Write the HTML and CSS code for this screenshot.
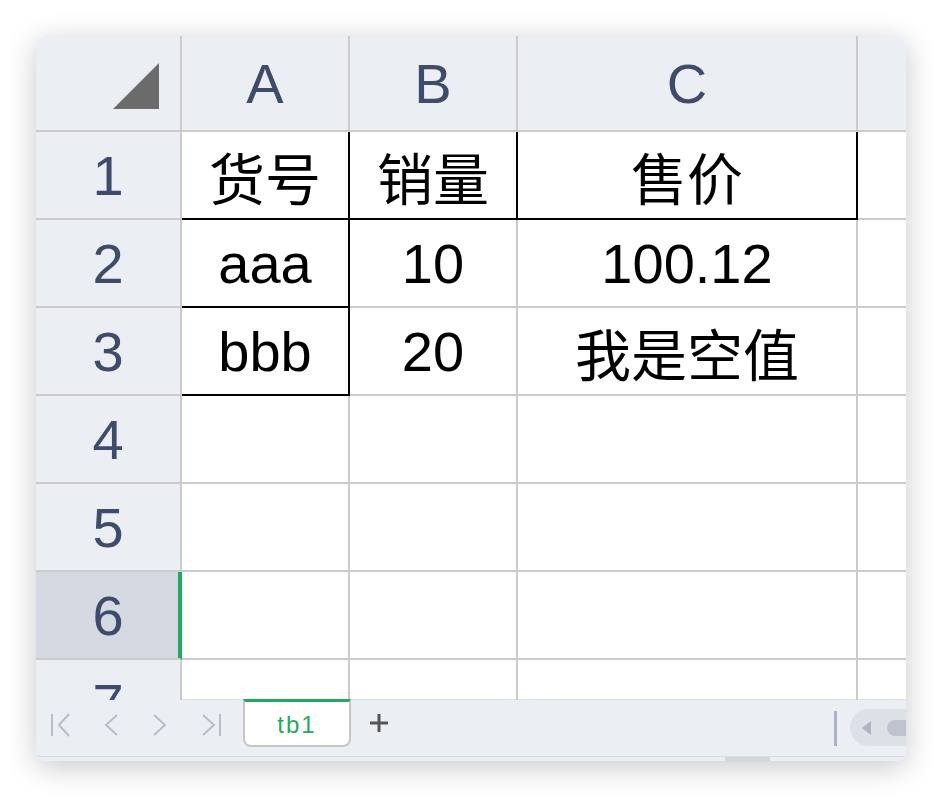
FILE: index.html
```html
<!DOCTYPE html>
<html lang="zh">
<head>
    <meta charset="UTF-8">
    <title>tb1</title>
    <link rel="stylesheet" href="styles.css">
</head>
<body>
    <div class="window">
        <div class="sheet">
            <div class="corner">
                <svg width="46" height="46" viewBox="0 0 46 46"><polygon points="46,0 46,46 0,46" fill="#6b6b6b"/></svg>
            </div>
            <div class="col-head">A</div>
            <div class="col-head">B</div>
            <div class="col-head">C</div>
            <div class="col-head last"></div>

            <div class="row-head">1</div>
            <div class="cell b-r b-b">货号</div>
            <div class="cell b-r b-b">销量</div>
            <div class="cell b-r b-b">售价</div>
            <div class="cell last"></div>

            <div class="row-head">2</div>
            <div class="cell b-r b-b">aaa</div>
            <div class="cell">10</div>
            <div class="cell">100.12</div>
            <div class="cell last"></div>

            <div class="row-head">3</div>
            <div class="cell b-r b-b">bbb</div>
            <div class="cell">20</div>
            <div class="cell">我是空值</div>
            <div class="cell last"></div>

            <div class="row-head">4</div>
            <div class="cell"></div>
            <div class="cell"></div>
            <div class="cell"></div>
            <div class="cell last"></div>

            <div class="row-head">5</div>
            <div class="cell"></div>
            <div class="cell"></div>
            <div class="cell"></div>
            <div class="cell last"></div>

            <div class="row-head active">6</div>
            <div class="cell"></div>
            <div class="cell"></div>
            <div class="cell"></div>
            <div class="cell last"></div>

            <div class="row-head">7</div>
            <div class="cell"></div>
            <div class="cell"></div>
            <div class="cell"></div>
            <div class="cell last"></div>
        </div>

        <div class="tabbar">
            <svg class="nav" width="195" height="58" viewBox="0 0 195 58">
                <g fill="none" stroke="#b9bdc9" stroke-width="2">
                    <line x1="16" y1="15" x2="16" y2="37"/>
                    <polyline points="33,15 23,26 33,37"/>
                    <polyline points="81,16 70,26 81,36"/>
                    <polyline points="118,16 129,26 118,36"/>
                    <polyline points="167,16 178,26 167,36"/>
                    <line x1="184" y1="15" x2="184" y2="37"/>
                </g>
            </svg>
            <div class="tab">tb1</div>
            <svg class="add" width="18" height="18" viewBox="0 0 18 18">
                <path d="M9 0 V18 M0 9 H18" stroke="#555" stroke-width="3"/>
            </svg>
            <div class="spacer"></div>
            <div class="divider"></div>
            <div class="scroll">
                <svg class="scroll-arrow" width="9" height="14" viewBox="0 0 9 14"><polygon points="9,0 9,14 0,7" fill="#aeb3c2"/></svg>
                <div class="scroll-thumb"></div>
            </div>
        </div>
        <div class="hscroll"><div class="hscroll-thumb"></div></div>
    </div>
</body>
</html>
```

FILE: styles.css
```css
body {
    margin: 0;
    padding: 36px;
    background-color: #fff;
    font-family: "Liberation Sans", "Noto Sans CJK SC", sans-serif;
}

.window {
    width: 870px;
    border-radius: 10px;
    overflow: hidden;
    background-color: #fff;
    box-shadow: 0 6px 30px rgba(0, 0, 0, 0.22);
}

.sheet {
    display: grid;
    grid-template-columns: 146px 168px 168px 340px 1fr;
    grid-template-rows: 96px;
    grid-auto-rows: 88px;
    height: 664px;
    overflow: hidden;
}

.sheet > div {
    box-sizing: border-box;
    border-right: 2px solid #cbcbcb;
    border-bottom: 2px solid #cbcbcb;
    display: flex;
    align-items: center;
    justify-content: center;
    font-size: 56px;
}

.corner {
    background-color: #ebeef2;
    justify-content: flex-end !important;
    align-items: flex-end !important;
    padding: 0 21px 21px 0;
}

.corner svg {
    display: block;
}

.col-head,
.row-head {
    background-color: #ebeef2;
    color: #3f4b6b;
}

.row-head.active {
    background-color: #d5d9e2;
    border-right-color: #1fab5f !important;
    box-shadow: inset -2px 0 0 #1fab5f;
}

.cell {
    color: #000;
}

.sheet > .last {
    border-right: none;
}

.sheet > .b-r {
    border-right-color: #000;
}

.sheet > .b-b {
    border-bottom-color: #000;
}

.tabbar {
    display: flex;
    align-items: flex-start;
    height: 58px;
    box-sizing: border-box;
    border-top: 1px solid #dcdfe6;
    border-bottom: 1px solid #d8dce4;
    background-color: #ebeef2;
    margin-top: -1px;
}

.nav {
    display: block;
    flex-shrink: 0;
    margin-top: -1px;
}

.tab {
    flex-shrink: 0;
    width: 108px;
    height: 48px;
    box-sizing: border-box;
    margin-top: -1px;
    margin-left: 12px;
    padding-top: 2px;
    background-color: #fff;
    border: 2px solid #c6c6c6;
    border-top: 3px solid #1fab5f;
    border-radius: 0 0 8px 8px;
    color: #1fab5f;
    font-size: 24px;
    letter-spacing: 2px;
    display: flex;
    align-items: center;
    justify-content: center;
}

.add {
    display: block;
    flex-shrink: 0;
    margin: 14px 0 0 19px;
}

.spacer {
    flex: 1;
}

.divider {
    width: 3px;
    height: 35px;
    margin-top: 11px;
    margin-right: 13px;
    background-color: #aab2c8;
    flex-shrink: 0;
}

.scroll {
    flex-shrink: 0;
    width: 56px;
    height: 37px;
    margin-top: 9px;
    border-radius: 19px 0 0 19px;
    background-color: #dde0e6;
    display: flex;
    align-items: center;
}

.scroll-arrow {
    display: block;
    margin-left: 12px;
}

.scroll-thumb {
    flex: 1;
    height: 16px;
    margin-left: 16px;
    border-radius: 8px 0 0 8px;
    background-color: #bfc3cf;
}

.hscroll {
    height: 4px;
    background-color: #ebeef2;
}

.hscroll-thumb {
    margin-left: 689px;
    width: 45px;
    height: 4px;
    background-color: #d3d6dc;
}
```
